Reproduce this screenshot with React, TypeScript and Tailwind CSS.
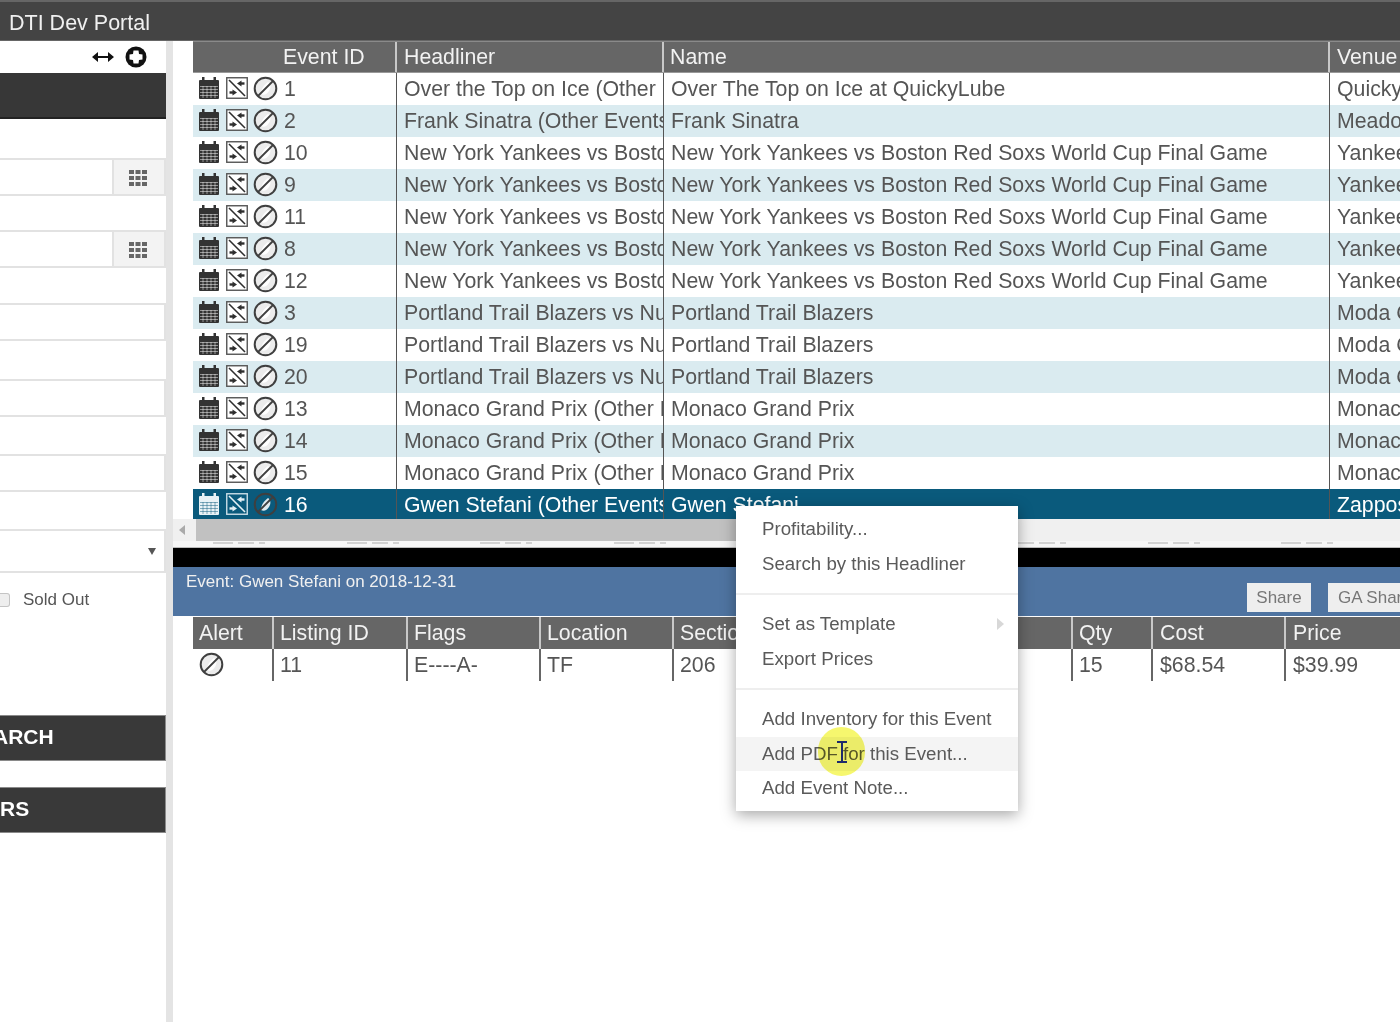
import { CSSProperties } from "react";

interface EventRow {
  id: number;
  headliner: string;
  name: string;
  venue: string;
}

const yankees = "New York Yankees vs Boston Red Soxs World Cup Final Game";

const events: EventRow[] = [
  { id: 1, headliner: "Over the Top on Ice (Other Events)", name: "Over The Top on Ice at QuickyLube", venue: "QuickyLube" },
  { id: 2, headliner: "Frank Sinatra (Other Events)", name: "Frank Sinatra", venue: "Meadowlands" },
  { id: 10, headliner: "New York Yankees vs Boston", name: yankees, venue: "Yankee Stadium" },
  { id: 9, headliner: "New York Yankees vs Boston", name: yankees, venue: "Yankee Stadium" },
  { id: 11, headliner: "New York Yankees vs Boston", name: yankees, venue: "Yankee Stadium" },
  { id: 8, headliner: "New York Yankees vs Boston", name: yankees, venue: "Yankee Stadium" },
  { id: 12, headliner: "New York Yankees vs Boston", name: yankees, venue: "Yankee Stadium" },
  { id: 3, headliner: "Portland Trail Blazers vs Nuggets", name: "Portland Trail Blazers", venue: "Moda Center" },
  { id: 19, headliner: "Portland Trail Blazers vs Nuggets", name: "Portland Trail Blazers", venue: "Moda Center" },
  { id: 20, headliner: "Portland Trail Blazers vs Nuggets", name: "Portland Trail Blazers", venue: "Moda Center" },
  { id: 13, headliner: "Monaco Grand Prix (Other Events)", name: "Monaco Grand Prix", venue: "Monaco" },
  { id: 14, headliner: "Monaco Grand Prix (Other Events)", name: "Monaco Grand Prix", venue: "Monaco" },
  { id: 15, headliner: "Monaco Grand Prix (Other Events)", name: "Monaco Grand Prix", venue: "Monaco" },
  { id: 16, headliner: "Gwen Stefani (Other Events)", name: "Gwen Stefani", venue: "Zappos Theater" },
];

const detailCols = [
  { label: "Alert", value: "", width: "w-[79px]", pad: "pl-[6px]" },
  { label: "Listing ID", value: "11", width: "w-[134px]", pad: "pl-[6px]" },
  { label: "Flags", value: "E----A-", width: "w-[133px]", pad: "pl-[6px]" },
  { label: "Location", value: "TF", width: "w-[133px]", pad: "pl-[6px]" },
  { label: "Section", value: "206", width: "w-[133px]", pad: "pl-[6px]" },
  { label: "Row", value: "", width: "w-[133px]", pad: "pl-[6px]" },
  { label: "Seats", value: "", width: "w-[133px]", pad: "pl-[6px]" },
  { label: "Qty", value: "15", width: "w-[80px]", pad: "pl-[6px]" },
  { label: "Cost", value: "$68.54", width: "w-[133px]", pad: "pl-[7px]" },
  { label: "Price", value: "$39.99", width: "w-[133px]", pad: "pl-[7px]" },
];

const ghostGroups = [0, 1, 2, 3, 4, 5, 6, 7, 8];

const font: CSSProperties = { fontFamily: '"Liberation Sans", Arial, sans-serif' };

function CalendarIcon({ selected }: { selected?: boolean }) {
  const color = selected ? "#e8f2f6" : "#333333";
  const grid = selected ? "#0a5a7c" : "#ffffff";
  return (
    <svg width="20" height="22" viewBox="0 0 20 22" className="shrink-0">
      <rect x="0" y="3" width="20" height="19" rx="1" fill={color} />
      <rect x="3" y="0" width="2.5" height="5" fill={color} />
      <rect x="14.5" y="0" width="2.5" height="5" fill={color} />
      <path d="M1 9.5h18M1 12.5h18M1 15.5h18M1 18.5h18" stroke={grid} strokeWidth="0.8" opacity="0.6" />
      <path d="M4 9v12M8 9v12M12 9v12M16 9v12" stroke={grid} strokeWidth="0.8" opacity="0.6" />
    </svg>
  );
}

function SwapIcon({ selected }: { selected?: boolean }) {
  const color = selected ? "#e4f0f5" : "#2e2e2e";
  return (
    <svg width="22" height="22" viewBox="0 0 22 22" className="shrink-0" fill="none">
      <rect x="0.75" y="0.75" width="20.5" height="20.5" stroke={selected ? "#c9dde6" : "#555555"} strokeWidth="1.4" fill={selected ? "none" : "#ffffff"} />
      <path d="M3 3l16 16" stroke={color} strokeWidth="1.6" />
      <path d="M18.5 6.5h-4" stroke={color} strokeWidth="2.4" />
      <path d="M15.5 3.5L11 6.5l4.5 3z" fill={color} />
      <path d="M3.5 15.5h4" stroke={color} strokeWidth="2.4" />
      <path d="M6.5 12.5l4.5 3-4.5 3z" fill={color} />
    </svg>
  );
}

function BanIcon({ selected }: { selected?: boolean }) {
  return (
    <svg width="25" height="25" viewBox="0 0 25 25" className="shrink-0" fill="none">
      <circle cx="12.5" cy="12.5" r="10.8" fill={selected ? "#0a5a7c" : "#ececec"} stroke="#3f3f3f" strokeWidth="2" />
      <path d="M8 18c0-5 3-9 7-12 3 2 3 6 1 9-2 3-5 5-8 3z" fill={selected ? "#dfe9ee" : "#ffffff"} />
      <path d="M5 20L20 5" stroke="#3f3f3f" strokeWidth="1.8" />
    </svg>
  );
}

function GridIcon() {
  return (
    <svg width="18" height="16" viewBox="0 0 18 16" fill="#666666">
      <rect x="0" y="0" width="5" height="4" />
      <rect x="6.5" y="0" width="5" height="4" />
      <rect x="13" y="0" width="5" height="4" />
      <rect x="0" y="6" width="5" height="4" />
      <rect x="6.5" y="6" width="5" height="4" />
      <rect x="13" y="6" width="5" height="4" />
      <rect x="0" y="12" width="5" height="4" />
      <rect x="6.5" y="12" width="5" height="4" />
      <rect x="13" y="12" width="5" height="4" />
    </svg>
  );
}

function Sidebar() {
  return (
    <aside className="w-[166px] shrink-0 flex flex-col">
      <div className="h-[32px] flex items-center justify-end gap-[11px] pr-[19px]">
        <svg width="22" height="12" viewBox="0 0 22 12" fill="#111111">
          <path d="M0 6l6-5v4h10V1l6 5-6 5V7H6v4z" />
        </svg>
        <svg width="22" height="22" viewBox="0 0 22 22">
          <circle cx="11" cy="11" r="10.5" fill="#111111" />
          <path d="M8.5 4.5h5L14 8l3.5.5v5L14 14l-.5 3.5h-5L8 14l-3.5-.5v-5L8 8z" fill="#ffffff" />
        </svg>
      </div>
      <div className="h-[46px] bg-[#373737] border-b-2 border-[#222222]" />

      <div className="mt-[39px] h-[38px] flex border-y-2 border-r-2 border-[#e2e2e2]">
        <div className="flex-1" />
        <div className="w-[52px] bg-[#f3f3f3] border-l-2 border-[#e2e2e2] flex items-center justify-center pt-[2px] pr-[2px]">
          <GridIcon />
        </div>
      </div>
      <div className="mt-[34px] h-[38px] flex border-y-2 border-r-2 border-[#e2e2e2]">
        <div className="flex-1" />
        <div className="w-[52px] bg-[#f3f3f3] border-l-2 border-[#e2e2e2] flex items-center justify-center pt-[2px] pr-[2px]">
          <GridIcon />
        </div>
      </div>
      <div className="mt-[35px] h-[38px] border-y-2 border-r-2 border-[#e2e2e2]" />
      <div className="mt-[38px] h-[38px] border-y-2 border-r-2 border-[#e2e2e2]" />
      <div className="mt-[37px] h-[38px] border-y-2 border-r-2 border-[#e2e2e2]" />
      <div className="mt-[37px] h-[44px] border-y-2 border-r-2 border-[#e2e2e2] flex items-center justify-end pr-[8px]">
        <span className="w-0 h-0 border-x-[4px] border-x-transparent border-t-[7px] border-t-[#555555]" />
      </div>

      <div className="mt-[17px] h-[20px] flex items-center gap-[13px] text-[17px] text-[#555555]">
        <span className="w-[10px] h-[14px] rounded-r-[3px] bg-[#eeeeee] border border-l-0 border-[#c4c4c4]" />
        Sold Out
      </div>

      <div className="mt-[105px] h-[46px] bg-[#393939] border border-[#8a8a8a] border-l-0 flex items-center pb-[2px] text-white font-bold text-[21px] overflow-hidden">
        <span className="-ml-[7px]">ARCH</span>
      </div>
      <div className="mt-[26px] h-[46px] bg-[#393939] border border-[#8a8a8a] border-l-0 flex items-center pb-[2px] text-white font-bold text-[21px]">
        RS
      </div>
    </aside>
  );
}

function EventsTable() {
  return (
    <div className="ml-[20px] flex flex-col h-[478px] overflow-hidden">
      <div className="flex h-[32px] shrink-0 bg-[#666666] text-[#f2f2f2] border-t border-[#8a8a8a] border-b border-b-[#999999]">
        <div className="w-[202px] shrink-0 pl-[90px] leading-[31px]">Event ID</div>
        <div className="w-[267px] shrink-0 pl-[7px] border-l-2 border-[#c8c8c8] leading-[31px]">Headliner</div>
        <div className="w-[666px] shrink-0 pl-[6px] border-l-2 border-[#c8c8c8] leading-[31px]">Name</div>
        <div className="flex-1 pl-[7px] border-l-2 border-[#c8c8c8] leading-[31px]">Venue</div>
      </div>
      {events.map((row, i) => {
        const selected = row.id === 16;
        return (
          <div
            key={row.id}
            className={`flex h-[32px] shrink-0 whitespace-nowrap ${
              selected ? "bg-[#0a5a7c] text-white" : i % 2 === 1 ? "bg-[#daebf0] text-[#555555]" : "bg-white text-[#555555]"
            }`}
          >
            <div className="w-[203px] shrink-0 flex items-center pl-[6px] gap-[6px]">
              <div className="flex items-center gap-[7px] -mt-[2px]">
                <CalendarIcon selected={selected} />
                <SwapIcon selected={selected} />
                <span className="-ml-[2px]">
                  <BanIcon selected={selected} />
                </span>
              </div>
              <span className="leading-[32px]">{row.id}</span>
            </div>
            <div className="w-[267px] shrink-0 overflow-hidden pl-[7px] border-l border-[#555555] leading-[32px]">{row.headliner}</div>
            <div className="w-[666px] shrink-0 overflow-hidden pl-[7px] border-l border-[#555555] leading-[32px]">{row.name}</div>
            <div className="flex-1 overflow-hidden pl-[7px] border-l border-[#555555] leading-[32px]">{row.venue}</div>
          </div>
        );
      })}
    </div>
  );
}

function DetailTable() {
  return (
    <div className="ml-[20px] mt-px">
      <div className="flex h-[32px] bg-[#666666] text-[#f2f2f2] whitespace-nowrap">
        {detailCols.map((col, i) => (
          <div
            key={col.label}
            className={`${col.width} ${col.pad} shrink-0 overflow-hidden leading-[32px] ${i > 0 ? "border-l-2 border-[#c8c8c8]" : ""}`}
          >
            {col.label}
          </div>
        ))}
      </div>
      <div className="flex h-[32px] text-[#555555] whitespace-nowrap">
        {detailCols.map((col, i) => (
          <div
            key={col.label}
            className={`${col.width} ${col.pad} shrink-0 leading-[32px] ${i > 0 ? "border-l-2 border-[#666666]" : ""}`}
          >
            {i === 0 ? (
              <span className="block pt-[3px]">
                <BanIcon />
              </span>
            ) : (
              col.value
            )}
          </div>
        ))}
      </div>
    </div>
  );
}

function MenuItem({ label, hover, arrow }: { label: string; hover?: boolean; arrow?: boolean }) {
  return (
    <div className={`relative h-[34.7px] pl-[26px] leading-[33px] ${hover ? "bg-[#f4f4f4]" : ""}`}>
      {label}
      {arrow && (
        <span className="absolute right-[14px] top-[11px] w-0 h-0 border-y-[6px] border-y-transparent border-l-[7px] border-l-[#d8d8d8]" />
      )}
    </div>
  );
}

function ContextMenu() {
  return (
    <div className="absolute left-[736px] top-[506px] w-[282px] bg-white text-[18.7px] text-[#5a5a5a] shadow-[0_4px_14px_rgba(0,0,0,0.35)] z-10">
      <div className="pt-[6px] pb-[11.6px]">
        <MenuItem label="Profitability..." />
        <MenuItem label="Search by this Headliner" />
      </div>
      <div className="border-t-2 border-[#eeeeee] pt-[12px] pb-[11.6px]">
        <MenuItem label="Set as Template" arrow />
        <MenuItem label="Export Prices" />
      </div>
      <div className="border-t-2 border-[#eeeeee] pt-[12px] pb-[5px]">
        <MenuItem label="Add Inventory for this Event" />
        <MenuItem label="Add PDF for this Event..." hover />
        <MenuItem label="Add Event Note..." />
      </div>
    </div>
  );
}

function CursorHighlight() {
  return (
    <>
      <div className="absolute left-[818px] top-[727px] w-[47px] h-[49px] rounded-full bg-[#f6f76e] mix-blend-multiply z-20" />
      <svg
        width="14"
        height="22"
        viewBox="0 0 14 22"
        fill="none"
        stroke="#1d2a6b"
        strokeWidth="2"
        className="absolute left-[835px] top-[741px] z-20"
      >
        <path d="M2 1h10M2 21h10M7 1v20" />
      </svg>
    </>
  );
}

export default function App() {
  return (
    <div className="relative w-[1400px] h-[1022px] overflow-hidden bg-white text-[21.3px] blur-[0.5px]" style={font}>
      <header className="h-[41px] bg-[#444444] border-t-2 border-[#34495e] border-b border-[#666666] pl-[9px] text-[21.5px] leading-[42px] text-[#f0f0f0]">
        DTI Dev Portal
      </header>
      <div className="flex h-[981px]">
        <Sidebar />
        <div className="w-[7px] shrink-0 bg-[#e4e4e4]" />
        <main className="flex-1 min-w-0 flex flex-col overflow-hidden">
          <EventsTable />
          {/* horizontal scrollbar */}
          <div className="h-[22px] shrink-0 bg-[#f0f0f0] flex">
            <div className="w-[23px] shrink-0 flex items-center justify-center pr-[6px]">
              <span className="w-0 h-0 border-y-[5px] border-y-transparent border-r-[6px] border-r-[#aaaaaa]" />
            </div>
            <div className="w-[560px] bg-[#c1c1c1]" />
          </div>
          {/* tops of the cells scrolled under the bar */}
          <div className="h-[7px] shrink-0 border-b border-[#bbbbbb] bg-[#f6f6f6] flex pl-[40px] overflow-hidden">
            {ghostGroups.map((group) => (
              <div key={group} className="w-[133.5px] shrink-0 flex gap-[5px] pt-[1px]">
                <span className="w-[20px] h-[2px] bg-[#d2d2d2]" />
                <span className="w-[16px] h-[2px] bg-[#d2d2d2]" />
                <span className="w-[6px] h-[2px] bg-[#d2d2d2]" />
              </div>
            ))}
          </div>
          <div className="h-[19px] shrink-0 bg-black" />
          <div className="h-[49px] shrink-0 bg-[#4f74a1] relative flex">
            <div className="pl-[13px] pt-[2px] text-[17px] text-[#f0f0f0]">Event: Gwen Stefani on 2018-12-31</div>
            <div className="ml-auto flex items-start gap-[17px] pt-[16px] -mr-[32px] text-[17px] text-[#777777]">
              <span className="h-[29px] w-[64px] bg-[#eeeeee] text-center leading-[29px]">Share</span>
              <span className="h-[29px] w-[104px] bg-[#eeeeee] pl-[10px] leading-[29px] whitespace-nowrap">GA Share</span>
            </div>
          </div>
          <DetailTable />
        </main>
      </div>
      <ContextMenu />
      <CursorHighlight />
    </div>
  );
}
